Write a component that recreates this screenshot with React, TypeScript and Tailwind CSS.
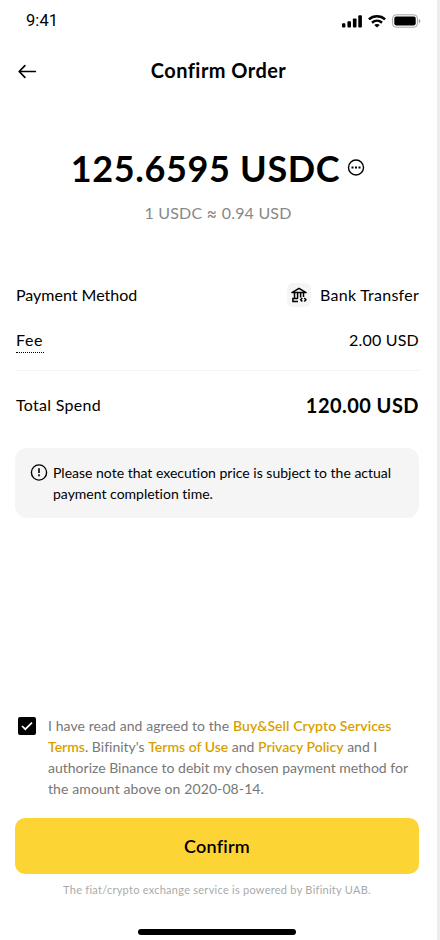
import React from "react";

interface RowProps {
  label: React.ReactNode;
  children: React.ReactNode;
  className?: string;
}

function Row({ label, children, className }: RowProps) {
  return (
    <div className={`flex items-center justify-between ${className || ""}`}>
      <div className="text-base">{label}</div>
      {children}
    </div>
  );
}

function TermsLink({ children }: { children: React.ReactNode }) {
  return <a className="font-semibold text-[#d89f00]">{children}</a>;
}

function StatusBar() {
  return (
    <div className="flex h-[41px] items-center justify-between pl-[26px] pr-[16px]">
      <span className="pt-px font-['Roboto',sans-serif] text-[16.5px] tracking-[0.1px]">9:41</span>
      <div className="flex items-center gap-[6px]">
        {/* Signal */}
        <svg width="20" height="14" viewBox="0 0 20 14" fill="currentColor">
          <rect x="0" y="9.2" width="3.400" height="4.300" rx=".9" />
          <rect x="5.400" y="7.200" width="3.600" height="6.300" rx=".9" />
          <rect x="10.900" y="4.400" width="3.600" height="9.100" rx=".9" />
          <rect x="16.300" y="1.300" width="3.600" height="12.200" rx=".9" />
        </svg>
        {/* Wifi */}
        <svg width="18" height="14" viewBox="0 0 18 14" fill="none" stroke="currentColor" strokeWidth="2.500">
          <path d="M.9 5.300C5.400 1.100 12.600 1.100 17.100 5.300" />
          <path d="M4 8.700c2.900-2.600 7.100-2.600 10 0" />
          <path d="M9 13.600 6.200 10.900c1.600-1.300 4-1.300 5.600 0z" fill="currentColor" stroke="none" />
        </svg>
        {/* Battery */}
        <svg width="29" height="14" viewBox="0 0 29 14">
          <rect x=".6" y=".8" width="24.800" height="12.400" rx="3.400" fill="none" stroke="#a6a6a6" />
          <rect x="2.300" y="2.600" width="21.400" height="8.800" rx="1.800" />
          <path d="M26.800 5v4.400c1-.4 1.600-1.200 1.600-2.200S27.800 5.400 26.800 5z" fill="#a6a6a6" />
        </svg>
      </div>
    </div>
  );
}

function BankIcon() {
  return (
    <span className="flex size-6 items-center justify-center rounded-md bg-[#f5f5f5]">
      <svg width="16" height="16" viewBox="0 0 16 16" fill="none" stroke="currentColor" strokeWidth="1.500">
        <path d="M.9 5.600 8 1.300l7.100 4.300z" strokeLinejoin="round" />
        <path d="M3.500 5.600v6M6.600 5.600v6M9.600 5.600v5M12.500 5.600v4.500" />
        <path d="M7 11.600H1.900v2.800H7" />
        <path d="M11.300 10.900 9.700 12.700l1.600 1.700M13.300 10.900l1.600 1.800-1.600 1.700" />
      </svg>
    </span>
  );
}

export default function App() {
  return (
    <div className="flex h-[940px] w-[440px] flex-col overflow-hidden border-r-[3px] border-[#ededed] bg-white font-['Lato',sans-serif] text-black [font-variant-ligatures:none]">
      <StatusBar />

      <header className="grid h-[60px] grid-cols-[40px_1fr_40px] items-center pl-[19px] pr-[19px]">
        <button aria-label="Back" className="-ml-[3px]">
          <svg width="22" height="16" viewBox="0 0 22 16" fill="none" stroke="currentColor" strokeWidth="1.700" strokeLinecap="round" strokeLinejoin="round">
            <path d="M19.300 8.500H3.200M8.900 2.700l-5.700 5.800 5.700 5.800" />
          </svg>
        </button>
        <h1 className="pb-[2px] text-center text-xl font-bold tracking-[0.45px] whitespace-nowrap">Confirm Order</h1>
      </header>

      <section className="mt-[39px] flex flex-col items-center pr-[1px]">
        <div className="flex items-center gap-[7px]">
          <span className="whitespace-nowrap text-[36px] leading-14 font-bold tracking-[0.65px]">125.6595 USDC</span>
          <svg width="18" height="18" viewBox="0 0 18 18" fill="none" stroke="currentColor" strokeWidth="1.400">
            <circle cx="9" cy="8.500" r="7.500" />
            <path d="M4.500 8.500h2M8 8.500h2M11.500 8.500h2" strokeWidth="2" />
          </svg>
        </div>
        <p className="mt-[5px] text-base leading-6 tracking-[0.2px] text-[#888]">
          1 USDC <span className="font-['Inter',sans-serif]">≈</span> 0.94 USD
        </p>
      </section>

      <section className="mt-[58px] pl-[15px] pr-[18px]">
        <Row label="Payment Method" className="h-6 pl-px">
          <div className="flex items-center gap-[9px] text-base tracking-[0.25px]">
            <BankIcon />
            <span>Bank Transfer</span>
          </div>
        </Row>
        <Row
          label={<span className="block border-b border-dotted border-black pr-px tracking-[0.6px]">Fee</span>}
          className="mt-[21px] h-6 pl-px"
        >
          <span className="text-base tracking-[0.2px]">2.00 USD</span>
        </Row>
        <hr className="mt-[18px] border-[#f3f3f3]" />
        <Row label={<span className="tracking-[0.3px]">Total Spend</span>} className="mt-[20px] h-7 pl-px">
          <span className="text-xl font-bold tracking-[0.45px]">120.00 USD</span>
        </Row>

        <div className="mt-[29px] flex h-[70px] rounded-xl bg-[#f5f5f5] pl-[15px] pt-[14px]">
          <svg className="mt-px" width="18" height="18" viewBox="0 0 18 18" fill="none" stroke="currentColor" strokeWidth="1.400">
            <circle cx="9" cy="9.500" r="7.600" />
            <path d="M9 5.200v4.700M9 11.300v2" strokeWidth="1.600" />
          </svg>
          <p className="ml-[5px] text-sm leading-[21px] whitespace-nowrap">
            Please note that execution price is subject to the actual
            <br />
            payment completion time.
          </p>
        </div>
      </section>

      <footer className="mt-[197px] pl-[15px] pr-[18px]">
        <div className="flex">
          <button role="checkbox" aria-checked="true" aria-label="Agree to terms" className="mt-[2px] ml-[3px] flex size-[18px] items-center justify-center rounded-[2px] bg-black">
            <svg width="12" height="10" viewBox="0 0 12 10" fill="none" stroke="#fff" strokeWidth="1.700">
              <path d="M1 5 4.300 8.200 11 1.600" />
            </svg>
          </button>
          <p className="ml-3 text-sm leading-[21px] whitespace-nowrap text-[#777]">
            <span className="tracking-[0.08px]">
              I have read and agreed to the <TermsLink>Buy&amp;Sell Crypto Services</TermsLink>
            </span>
            <br />
            <TermsLink>Terms</TermsLink>. Bifinity's <TermsLink>Terms of Use</TermsLink> and{" "}
            <TermsLink>Privacy Policy</TermsLink> and I
            <br />
            authorize Binance to debit my chosen payment method for
            <br />
            <span className="tracking-[0.1px]">the amount above on 2020-08-14.</span>
          </p>
        </div>
        <button className="mt-[19px] h-14 w-full rounded-[10px] bg-[#fcd535] text-lg font-semibold tracking-[0.2px]">Confirm</button>
        <p className="mt-[8px] text-center text-[11px] leading-4 tracking-[0.26px] text-[#aaa]">
          The fiat/crypto exchange service is powered by Bifinity UAB.
        </p>
        <div className="mx-auto mt-[31px] h-[6px] w-[158px] rounded-full bg-black" />
      </footer>
    </div>
  );
}
